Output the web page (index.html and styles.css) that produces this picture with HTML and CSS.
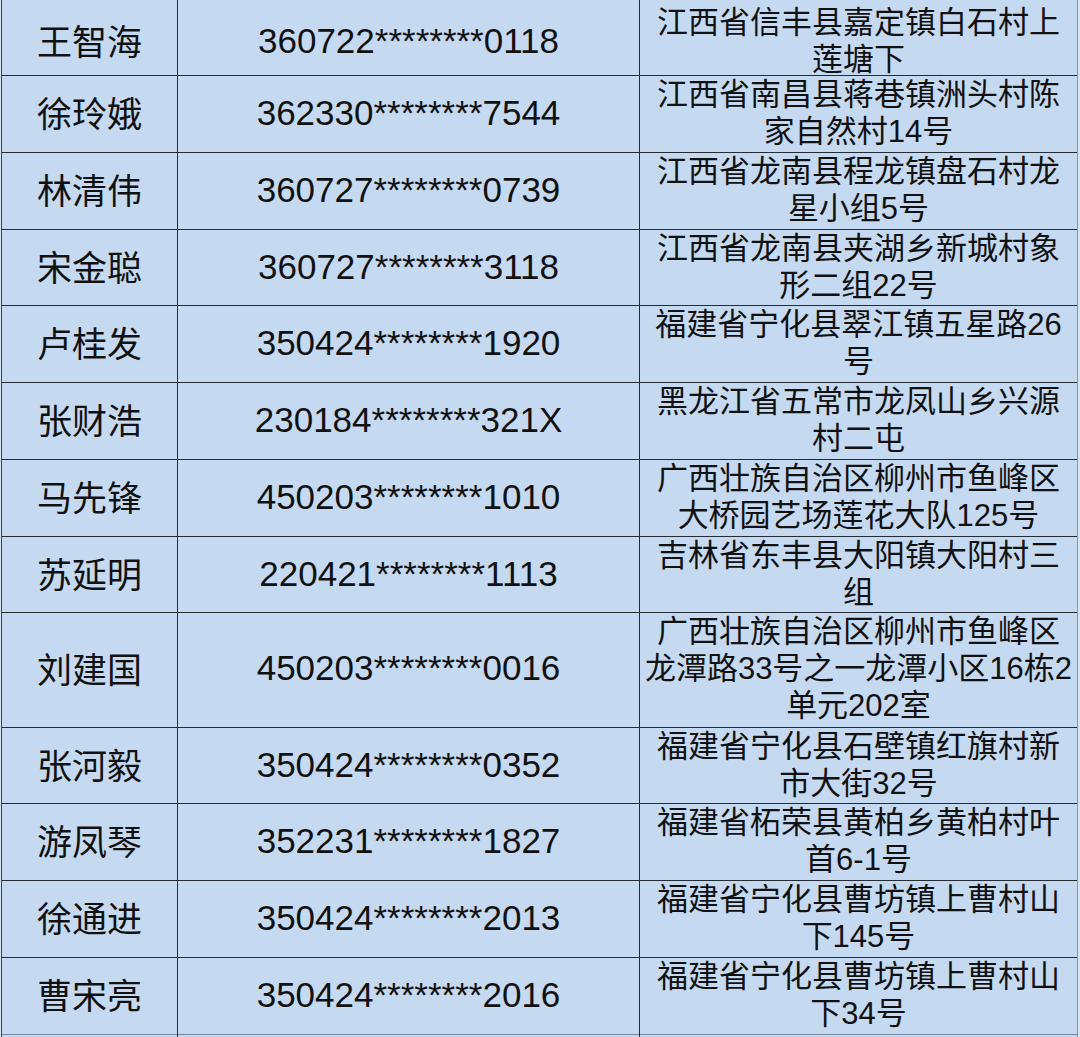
FILE: index.html
```html
<!DOCTYPE html>
<html lang="zh-CN">
<head>
<meta charset="utf-8">
<title>名单</title>
<link rel="stylesheet" href="styles.css">
</head>
<body>
<div class="sheet">
  <div class="row h76 first"><div class="cell name">王智海</div><div class="cell id">360722********0118</div><div class="cell addr">江西省信丰县嘉定镇白石村上<br>莲塘下</div></div>
  <div class="row h77"><div class="cell name">徐玲娥</div><div class="cell id">362330********7544</div><div class="cell addr">江西省南昌县蒋巷镇洲头村陈<br>家自然村14号</div></div>
  <div class="row h77"><div class="cell name">林清伟</div><div class="cell id">360727********0739</div><div class="cell addr">江西省龙南县程龙镇盘石村龙<br>星小组5号</div></div>
  <div class="row h76"><div class="cell name">宋金聪</div><div class="cell id">360727********3118</div><div class="cell addr">江西省龙南县夹湖乡新城村象<br>形二组22号</div></div>
  <div class="row h77"><div class="cell name">卢桂发</div><div class="cell id">350424********1920</div><div class="cell addr">福建省宁化县翠江镇五星路26<br>号</div></div>
  <div class="row h77"><div class="cell name">张财浩</div><div class="cell id">230184********321X</div><div class="cell addr">黑龙江省五常市龙凤山乡兴源<br>村二屯</div></div>
  <div class="row h77"><div class="cell name">马先锋</div><div class="cell id">450203********1010</div><div class="cell addr">广西壮族自治区柳州市鱼峰区<br>大桥园艺场莲花大队125号</div></div>
  <div class="row h76"><div class="cell name">苏延明</div><div class="cell id">220421********1113</div><div class="cell addr">吉林省东丰县大阳镇大阳村三<br>组</div></div>
  <div class="row h115"><div class="cell name">刘建国</div><div class="cell id">450203********0016</div><div class="cell addr">广西壮族自治区柳州市鱼峰区<br>龙潭路33号之一龙潭小区16栋2<br>单元202室</div></div>
  <div class="row h76"><div class="cell name">张河毅</div><div class="cell id">350424********0352</div><div class="cell addr">福建省宁化县石壁镇红旗村新<br>市大街32号</div></div>
  <div class="row h77"><div class="cell name">游凤琴</div><div class="cell id">352231********1827</div><div class="cell addr">福建省柘荣县黄柏乡黄柏村叶<br>首6-1号</div></div>
  <div class="row h77"><div class="cell name">徐通进</div><div class="cell id">350424********2013</div><div class="cell addr">福建省宁化县曹坊镇上曹村山<br>下145号</div></div>
  <div class="row h77 last"><div class="cell name">曹宋亮</div><div class="cell id">350424********2016</div><div class="cell addr">福建省宁化县曹坊镇上曹村山<br>下34号</div></div>
  <div class="row tail"><div class="cell name"></div><div class="cell id"></div><div class="cell addr"></div></div>
</div>
</body>
</html>
```
FILE: styles.css
```css
html, body {
  margin: 0;
  padding: 0;
  background: #d6e3f3;
  overflow: hidden;
}

.sheet {
  margin-left: 1px;
  width: 1077px;
  box-sizing: border-box;
  background: #c5d9f1;
  border-left: 1px solid #3a4350;
  border-right: 1px solid #8494a8;
  font-family: "Liberation Sans", "Noto Sans CJK SC", sans-serif;
  color: #111;
}

.row {
  display: grid;
  grid-template-columns: 176px 462px 437px;
  box-sizing: border-box;
  border-bottom: 1px solid #252b33;
}

.h76 { height: 76px; }
.h77 { height: 77px; }
.h115 { height: 115px; }

.row.last { border-bottom-color: #75859b; }
.row.tail { height: 12px; border-bottom: none; }

.cell {
  box-sizing: border-box;
  display: flex;
  align-items: center;
  justify-content: center;
  text-align: center;
  white-space: nowrap;
}

.name, .id {
  border-right: 1px solid #252b33;
}

.name {
  font-size: 35px;
  padding-bottom: 6px;
}

.id {
  font-size: 35px;
  padding-bottom: 4px;
}

.addr {
  font-size: 31px;
  line-height: 37px;
  padding-bottom: 3px;
}

.first .cell { padding-top: 4px; }
```
